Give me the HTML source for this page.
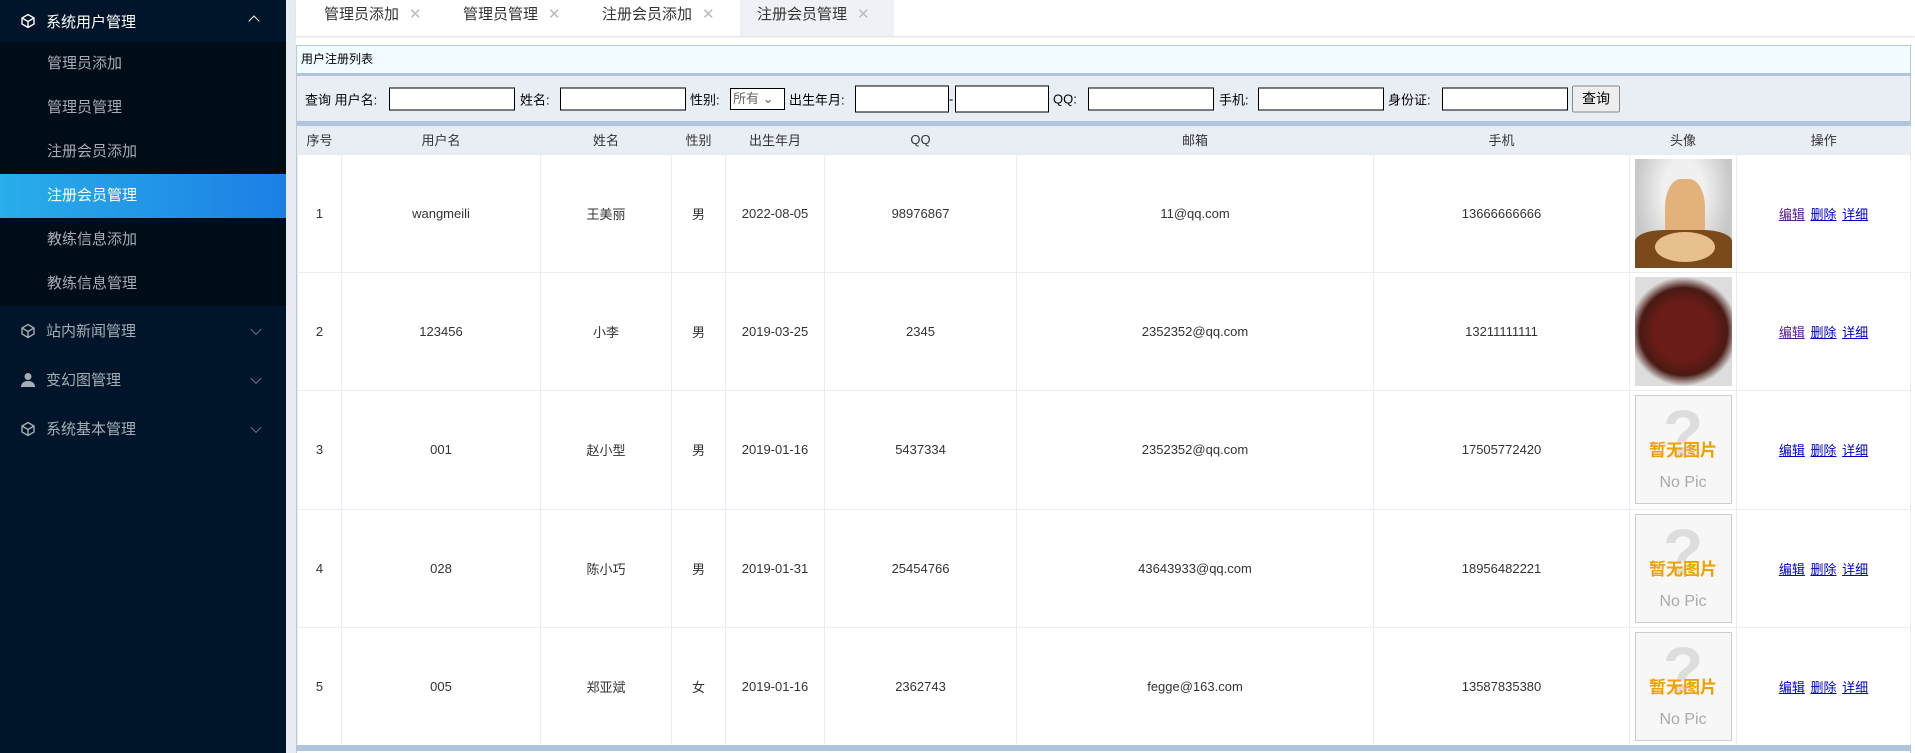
<!DOCTYPE html>
<html><head><meta charset="utf-8"><style>
*{margin:0;padding:0;box-sizing:border-box}
body{width:1915px;height:753px;overflow:hidden;background:#fff;font-family:"Liberation Sans","Noto Sans CJK SC",sans-serif;position:relative}
#side{position:absolute;left:0;top:0;width:286px;height:753px;background:#001529;color:#a6adb4;font-size:15px}
.gap{position:absolute;left:286px;top:0;width:10px;height:753px;background:#e8ebf0}
.mh{height:42px;display:flex;align-items:center;padding-left:20px;color:#fff;background:#001529;position:relative}
.mh svg{margin-right:10px}
.sub{background:#000c17}
.it{height:44px;line-height:44px;padding-left:47px}
.act{background:linear-gradient(90deg,#29aee8,#1c7fe6);color:#fff}
.m2{height:49px;display:flex;align-items:center;padding-left:20px;position:relative}
.m2 svg{margin-right:10px}
.arr{position:absolute;right:26px;top:50%;width:8px;height:8px;border-right:1px solid #6b7785;border-bottom:1px solid #6b7785;transform:translateY(-70%) rotate(45deg)}
#tabs{position:absolute;left:296px;top:0;right:0;height:36px;background:#fff;font-size:15px;color:#333;box-shadow:0 1px 2px #ddd}
.tab{position:absolute;top:0;height:36px;line-height:30px}
.tab i{font-style:normal;color:#bbb;margin-left:10px}
#panel{position:absolute;left:296px;top:45px;width:1615px;height:708px;border:1px solid #b4c8e0;border-bottom:none}
.ttl{height:30px;background:#f0fcff;border-bottom:3px solid #b0c4de;font-size:12px;line-height:26px;padding-left:4px}
.srch{height:50px;background:#e9eef5;font-size:13px;position:relative;border-bottom:5px solid #b0c4de;color:#000}
.srch span,.srch input{position:absolute;top:50%;transform:translateY(-50%)}
.srch input{height:23px;border:1px solid #000;background:#fff;width:126px}
.srch .sel{border:1px solid #000;height:22px;width:55px;font-size:13px;color:#666;line-height:20px;padding-left:2px;background:#fff}
.srch .btn{border:1px solid #888;border-radius:2px;background:#eee;height:27px;width:48px;font-size:14px;text-align:center;line-height:25px}
table{border-collapse:collapse;table-layout:fixed;width:1613px;font-size:13px;color:#333}
th{height:28px;background:#e9eef5;font-weight:normal;border-left:1px solid #e9eef5}
td{height:118.4px;text-align:center;border:1px solid #e8ecf3}
a{color:#00c;text-decoration:underline;margin:0 1px}
a.v{color:#551a8b}
.np{width:97px;height:109px;margin:auto;border:1px solid #ccc;background:#f7f7f7;position:relative;font-weight:bold}
.np span{position:absolute;left:0;width:100%;text-align:center}
.np .q{top:2px;font-size:66px;color:#ddd;line-height:70px}
.np .c{top:40px;color:#f0a000;font-size:17px}
.np .e{top:78px;color:#aaa;font-size:16px;font-weight:normal}
.bot{position:absolute;left:296px;top:745px;width:1615px;height:6px;background:#b0c4de}
</style></head><body>
<div id="side">
<div class="mh"><svg width="16" height="16" viewBox="0 0 16 16" fill="none" stroke="#fff" stroke-width="1.4"><path d="M8 1.5L14 5v6l-6 3.5L2 11V5z M2 5l6 3.5L14 5 M8 8.5v6"/></svg>系统用户管理<span style="position:absolute;right:28px;top:17px;width:8px;height:8px;border-left:1.5px solid #fff;border-top:1.5px solid #fff;transform:rotate(45deg)"></span></div>
<div class="sub">
<div class="it">管理员添加</div><div class="it">管理员管理</div><div class="it">注册会员添加</div>
<div class="it act">注册会员管理</div><div class="it">教练信息添加</div><div class="it">教练信息管理</div>
</div>
<div class="m2"><svg width="16" height="16" viewBox="0 0 16 16" fill="none" stroke="#a6adb4" stroke-width="1.4"><path d="M8 1.5L14 5v6l-6 3.5L2 11V5z M2 5l6 3.5L14 5 M8 8.5v6"/></svg>站内新闻管理<span class="arr"></span></div>
<div class="m2"><svg width="16" height="16" viewBox="0 0 16 16" fill="#a6adb4"><circle cx="8" cy="4.5" r="3.5"/><path d="M1 15c0-4 3-6 7-6s7 2 7 6z"/></svg>变幻图管理<span class="arr"></span></div>
<div class="m2"><svg width="16" height="16" viewBox="0 0 16 16" fill="none" stroke="#a6adb4" stroke-width="1.4"><path d="M8 1.5L14 5v6l-6 3.5L2 11V5z M2 5l6 3.5L14 5 M8 8.5v6"/></svg>系统基本管理<span class="arr"></span></div>
</div>
<div class="gap"></div>
<div id="tabs">
<div class="tab" style="left:28px">管理员添加<i>✕</i></div>
<div class="tab" style="left:167px">管理员管理<i>✕</i></div>
<div class="tab" style="left:306px">注册会员添加<i>✕</i></div>
<div class="tab" style="left:444px;background:#eef1f6;width:154px;padding-left:17px">注册会员管理<i>✕</i></div>
</div>
<div id="panel">
<div class="ttl">用户注册列表</div>
<div class="srch">
<span style="left:8px">查询 用户名:</span><input style="left:92px">
<span style="left:223px">姓名:</span><input style="left:263px">
<span style="left:393px">性别:</span><span class="sel" style="left:433px">所有 ⌄</span>
<span style="left:492px">出生年月:</span><input style="left:558px;width:94px;height:27px"><span style="left:652px">-</span><input style="left:658px;width:94px;height:27px">
<span style="left:756px">QQ:</span><input style="left:791px">
<span style="left:922px">手机:</span><input style="left:961px">
<span style="left:1091px">身份证:</span><input style="left:1145px">
<span class="btn" style="left:1275px">查询</span>
</div>
<table>
<colgroup><col style="width:44px"><col style="width:199px"><col style="width:131px"><col style="width:54px"><col style="width:99px"><col style="width:192px"><col style="width:357px"><col style="width:256px"><col style="width:107px"><col style="width:174px"></colgroup>
<tr><th>序号</th><th>用户名</th><th>姓名</th><th>性别</th><th>出生年月</th><th>QQ</th><th>邮箱</th><th>手机</th><th>头像</th><th>操作</th></tr>
<tr><td>1</td><td>wangmeili</td><td>王美丽</td><td>男</td><td>2022-08-05</td><td>98976867</td><td>11@qq.com</td><td>13666666666</td><td><div style="width:97px;height:109px;margin:auto;background:radial-gradient(ellipse at 50% 30%,#f0f0f0 30%,#c8c8c8 70%);position:relative;overflow:hidden"><div style="position:absolute;left:30px;top:20px;width:40px;height:70px;background:#e3b27a;border-radius:40% 40% 30% 30%"></div><div style="position:absolute;left:0;bottom:0;width:97px;height:38px;background:#7a4a1c;border-radius:30% 30% 0 0"></div><div style="position:absolute;left:20px;bottom:6px;width:60px;height:30px;background:#e8c090;border-radius:50%"></div></div></td><td><a class="v">编辑</a> <a>删除</a> <a>详细</a></td></tr>
<tr><td>2</td><td>123456</td><td>小李</td><td>男</td><td>2019-03-25</td><td>2345</td><td>2352352@qq.com</td><td>13211111111</td><td><div style="width:97px;height:109px;margin:auto;background:radial-gradient(circle at 50% 50%,#6a1c18 40%,#4a1a14 60%,#ddd 75%)"></div></td><td><a class="v">编辑</a> <a>删除</a> <a>详细</a></td></tr>
<tr><td>3</td><td>001</td><td>赵小型</td><td>男</td><td>2019-01-16</td><td>5437334</td><td>2352352@qq.com</td><td>17505772420</td><td><div class="np"><span class="q">?</span><span class="c">暂无图片</span><span class="e">No Pic</span></div></td><td><a>编辑</a> <a>删除</a> <a>详细</a></td></tr>
<tr><td>4</td><td>028</td><td>陈小巧</td><td>男</td><td>2019-01-31</td><td>25454766</td><td>43643933@qq.com</td><td>18956482221</td><td><div class="np"><span class="q">?</span><span class="c">暂无图片</span><span class="e">No Pic</span></div></td><td><a>编辑</a> <a>删除</a> <a>详细</a></td></tr>
<tr><td>5</td><td>005</td><td>郑亚斌</td><td>女</td><td>2019-01-16</td><td>2362743</td><td>fegge@163.com</td><td>13587835380</td><td><div class="np"><span class="q">?</span><span class="c">暂无图片</span><span class="e">No Pic</span></div></td><td><a>编辑</a> <a>删除</a> <a>详细</a></td></tr>
</table>
</div>
<div class="bot"></div>
</body></html>
